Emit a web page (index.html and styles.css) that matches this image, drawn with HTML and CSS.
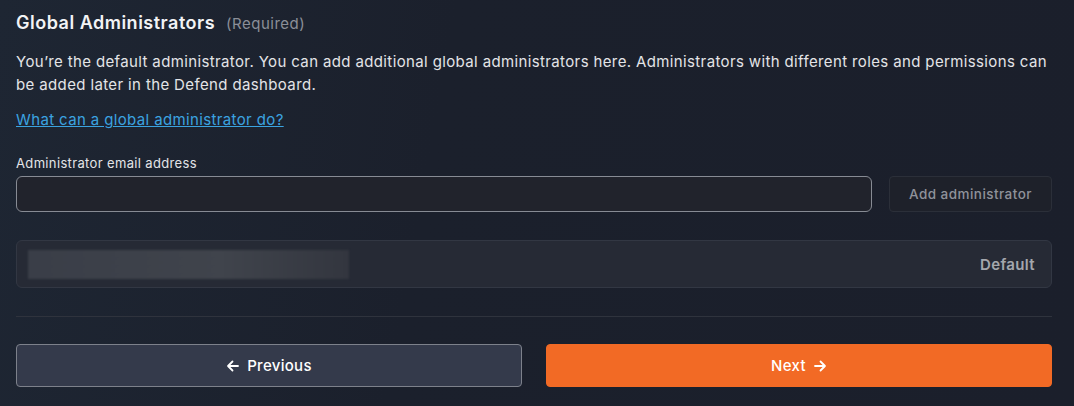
FILE: index.html
```html
<!DOCTYPE html>
<html lang="en">
<head>
<meta charset="utf-8">
<title>Global Administrators</title>
<link rel="stylesheet" href="styles.css">
</head>
<body>
<main class="panel">
  <h2 class="title">Global Administrators <span class="req">(Required)</span></h2>
  <p class="desc">You’re the default administrator. You can add additional global administrators here. Administrators with different roles and permissions can be added later in the Defend dashboard.</p>
  <a class="link" href="#">What can a global administrator do?</a>
  <label class="label" for="email">Administrator email address</label>
  <div class="add-row">
    <input id="email" class="input" type="email">
    <button class="add-btn" type="button">Add administrator</button>
  </div>
  <div class="admin-item">
    <div class="blur"></div>
    <span class="default">Default</span>
  </div>
  <hr class="divider">
  <div class="nav">
    <button class="btn prev" type="button">
      <svg width="14" height="14" viewBox="0 0 14 14" fill="none" stroke="currentColor" stroke-width="1.8" stroke-linecap="round" stroke-linejoin="round"><path d="M12 7H2M6.5 2.5L2 7l4.5 4.5"/></svg>
      Previous
    </button>
    <button class="btn next" type="button">
      Next
      <svg width="14" height="14" viewBox="0 0 14 14" fill="none" stroke="currentColor" stroke-width="1.8" stroke-linecap="round" stroke-linejoin="round"><path d="M2 7h10M7.5 2.5L12 7l-4.5 4.5"/></svg>
    </button>
  </div>
</main>
</body>
</html>
```
FILE: styles.css
```css
* { box-sizing: border-box; }
html, body { margin: 0; height: 100%; }
body {
  background: linear-gradient(100deg, #1e2633 0%, #1b202c 40%, #1b1f2b 100%);
  font-family: Inter, "Open Sans", sans-serif;
  color: #e6e7ea;
}
.panel {
  padding: 12px 22px 0 16px;
  display: flex;
  flex-direction: column;
}
.title {
  margin: 0;
  font-size: 18px;
  font-weight: 600;
  letter-spacing: 0.5px;
  color: #f2f3f5;
  line-height: 22px;
}
.req {
  font-size: 15px;
  font-weight: 400;
  letter-spacing: 0.5px;
  color: #8b8f98;
  margin-left: 6px;
}
.desc {
  margin: 15px 0 0;
  font-size: 15px;
  letter-spacing: 0.37px;
  line-height: 23px;
  color: #e3e4e7;
}
.link {
  margin-top: 14px;
  font-size: 15px;
  letter-spacing: 0.37px;
  line-height: 20px;
  color: #3ba3e0;
  text-decoration: underline;
  align-self: flex-start;
}
.label {
  margin-top: 25px;
  font-size: 13px;
  letter-spacing: 0.35px;
  line-height: 16px;
  color: #e3e4e7;
}
.add-row {
  margin-top: 5px;
  display: flex;
  gap: 17px;
}
.input {
  flex: 1;
  height: 36px;
  background: #21232c;
  border: 1px solid #878b94;
  border-radius: 6px;
  color: #fff;
  padding: 0 12px;
  font: inherit;
}
.add-btn {
  width: 163px;
  height: 36px;
  background: #1e212a;
  border: 1px solid #2b2f39;
  border-radius: 4px;
  color: #8f929a;
  font-family: inherit;
  font-size: 13.5px;
  letter-spacing: 0.45px;
  font-weight: 500;
}
.admin-item {
  margin-top: 28px;
  height: 48px;
  display: flex;
  align-items: center;
  justify-content: space-between;
  padding: 0 16px 0 11px;
  background: #262a35;
  border: 1px solid #323743;
  border-radius: 6px;
}
.blur {
  width: 321px;
  height: 29px;
  background: linear-gradient(90deg, #3a3e48 0%, #40444c 60%, #33363f 100%);
  filter: blur(1px);
}
.default {
  font-size: 15px;
  font-weight: 600;
  letter-spacing: 0.35px;
  color: #a4a7ad;
}
.divider {
  margin: 28px 0 0;
  border: 0;
  border-top: 1px solid #2f333d;
}
.nav {
  margin-top: 27px;
  display: flex;
  gap: 24px;
}
.btn {
  flex: 1;
  height: 43px;
  border-radius: 4px;
  display: flex;
  align-items: center;
  justify-content: center;
  gap: 7px;
  font-family: inherit;
  font-size: 15px;
  letter-spacing: 0.3px;
  font-weight: 500;
  color: #fff;
}
.prev {
  background: #343a4b;
  border: 1px solid #7d818b;
}
.next {
  background: #f26a25;
  border: 1px solid #f26a25;
}
```
